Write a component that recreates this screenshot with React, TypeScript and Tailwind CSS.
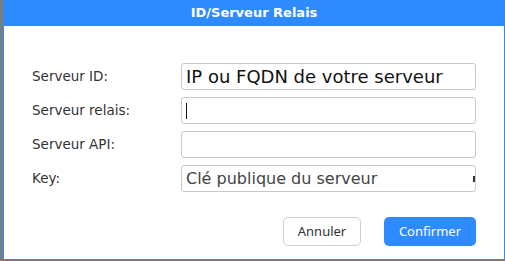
const font = "font-['DejaVu_Sans',sans-serif]";

function Row({ label, children }: { label: string; children: React.ReactNode }) {
  return (
    <div className="flex items-center">
      <div className="w-[149px] text-[13.5px] text-[#333]">{label}</div>
      <div className="relative flex h-[27px] w-[295px] items-center rounded-[3px] border border-[#c8c8c8] bg-white px-[4px]">{children}</div>
    </div>
  );
}

export default function App() {
  return (
    <div className={`flex h-[261px] w-[505px] bg-[#7b7b7b] pb-[1px] pl-[3px] ${font}`}>
      <div className="flex flex-1 flex-col border-x border-b border-[#2e8bff] bg-white">
        <div className="flex h-[26px] items-center justify-center bg-[#2e8bff] text-[13px] font-bold text-white">ID/Serveur Relais</div>
        <div className="flex flex-col gap-[7px] pl-[28px] pt-[37px]">
          <Row label="Serveur ID:">
            <span className="text-[18px] leading-none text-[#111]">IP ou FQDN de votre serveur</span>
          </Row>
          <Row label="Serveur relais:">
            <span className="h-[16px] w-px bg-[#111]" />
          </Row>
          <Row label="Serveur API:">{null}</Row>
          <Row label="Key:">
            <span className="text-[16px] leading-none text-[#444]">Clé publique du serveur</span>
            <span className="absolute right-0 top-[10px] h-[6px] w-[2px] bg-[#333]" />
          </Row>
        </div>
        <div className="mt-[25px] flex justify-end gap-[23px] pr-[28px] font-['Noto_Sans',sans-serif] text-[13px]">
          <button className="h-[29px] w-[78px] rounded-[5px] border border-[#cfcfcf] bg-white text-[#333]">Annuler</button>
          <button className="h-[29px] w-[92px] rounded-[5px] bg-[#2e8bff] text-white">Confirmer</button>
        </div>
      </div>
    </div>
  );
}
